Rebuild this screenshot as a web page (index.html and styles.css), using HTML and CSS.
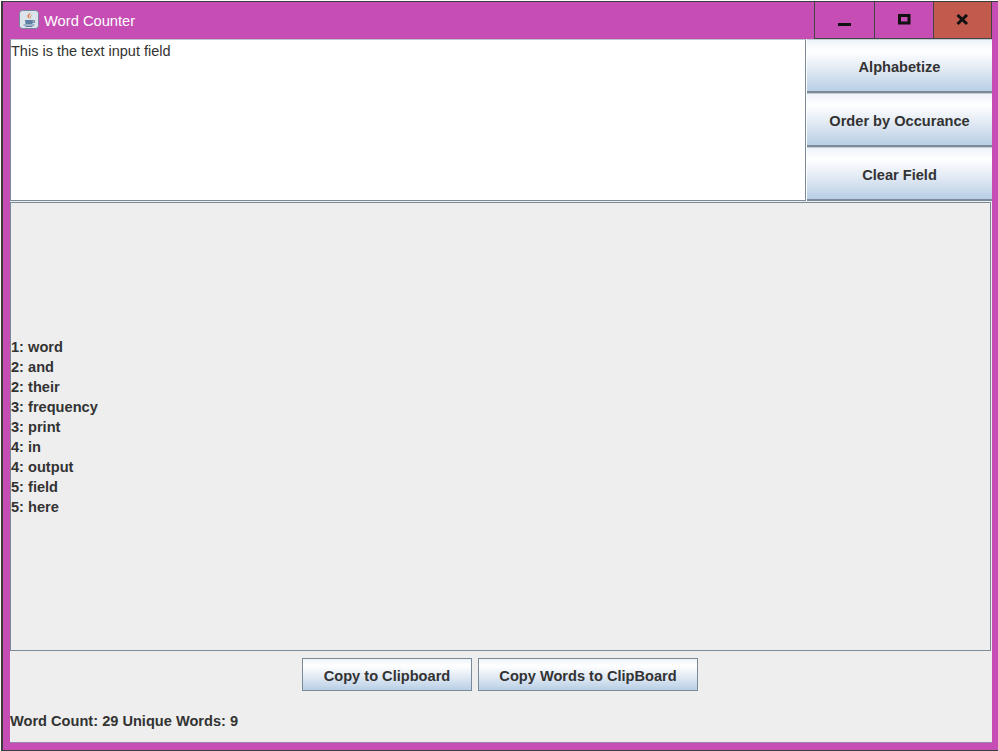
FILE: index.html
```html
<!DOCTYPE html>
<html>
  <head>
    <link rel="stylesheet" href="styles.css">
  </head>
  <body>
    <div class="window">
      <div class="title-bar">
        <div class="app-icon">
          <svg width="20" height="19" viewBox="0 0 20 19">
            <rect x="0.5" y="0.5" width="19" height="18" rx="3" fill="#dde3ea" stroke="#76899c"/>
            <path d="M11 2.500c1 1.700-1.800 2.700-1.200 4.400.2.700.8 1.200 1 1.800-1.700-.9-2.700-1.900-2.300-3.200.4-1.300 2.500-1.600 2.500-3z" fill="#dc6a2c"/>
            <path d="M12.800 5c-1.100.7-1.900 1.300-1.600 2.400.1.400.4.700.5 1.100" fill="none" stroke="#e08a4a" stroke-width="0.900"/>
            <path d="M6 10h8l-.6 4H6.600z" fill="#5d7fa3"/>
            <path d="M14 10.700h1.600v1.700h-2.200" fill="none" stroke="#5d7fa3"/>
            <path d="M4.500 15h11M6.500 16.500h7" stroke="#5d7fa3"/>
          </svg>
        </div>
        <div class="title">Word Counter</div>
        <div class="window-buttons">
          <div class="window-button">
            <svg width="13" height="13" viewBox="0 0 13 13"><rect x="0" y="9" width="13" height="3" fill="#111"/></svg>
          </div>
          <div class="window-button maximize-button">
            <svg width="13" height="13" viewBox="0 0 13 13"><rect x="1.500" y="1.500" width="9.500" height="7.500" fill="none" stroke="#111" stroke-width="3"/></svg>
          </div>
          <div class="window-button close-button">
            <svg width="13" height="13" viewBox="0 0 13 13"><path d="M1.500 1l9.500 9M11 1l-9.500 9" stroke="#111" stroke-width="3" fill="none"/></svg>
          </div>
        </div>
      </div>
      <div class="content">
        <div class="top-row">
          <div class="text-input">This is the text input field</div>
          <div class="side-buttons">
            <div class="button side-button">Alphabetize</div>
            <div class="button side-button">Order by Occurance</div>
            <div class="button side-button">Clear Field</div>
          </div>
        </div>
        <div class="output">
          <div>1: word</div>
          <div>2: and</div>
          <div>2: their</div>
          <div>3: frequency</div>
          <div>3: print</div>
          <div>4: in</div>
          <div>4: output</div>
          <div>5: field</div>
          <div>5: here</div>
        </div>
        <div class="copy-row">
          <div class="button copy-button">Copy to Clipboard</div>
          <div class="button copy-button">Copy Words to ClipBoard</div>
        </div>
        <div class="status">Word Count: 29 Unique Words: 9</div>
      </div>
    </div>
  </body>
</html>
```
FILE: styles.css
```css
html, body {
  margin: 0;
  background-color: #fff;
}
.window {
  box-sizing: border-box;
  width: 997px;
  height: 750px;
  margin: 1px 0 0 1px;
  background-color: #c64db4;
  border-left: 2px solid #3c3c3c;
  border-top: 1px solid #3c3c3c;
  border-bottom: 1px solid #3c3c3c;
  font-family: "Liberation Sans", Arial, sans-serif;
  color: #333;
  display: flex;
  flex-direction: column;
}
.title-bar {
  height: 37px;
  padding-left: 16px;
  display: flex;
  align-items: center;
  flex-shrink: 0;
}
.app-icon {
  width: 20px;
  height: 19px;
  margin-top: -2px;
}
.title {
  color: #fff;
  font-size: 14.7px;
  margin-left: 5px;
  margin-top: 1px;
}
.window-buttons {
  margin-left: auto;
  margin-right: 6px;
  display: flex;
  height: 37px;
  align-self: flex-start;
  border-bottom: 1px solid #444;
  box-sizing: border-box;
}
.window-button {
  box-sizing: border-box;
  width: 60px;
  border-left: 1px solid #444;
  display: flex;
  align-items: center;
  justify-content: center;
}
.maximize-button {
  width: 59px;
}
.close-button {
  width: 59px;
  background-color: #c25a4e;
  border-right: 1px solid #444;
}
.content {
  flex: 1;
  margin: 0 6px 7px 7px;
  background-color: #eee;
  display: flex;
  flex-direction: column;
  border-bottom: 1px solid #9a86a8;
}
.top-row {
  display: flex;
  height: 162px;
  gap: 1px;
  background-color: #fff;
}
.text-input {
  flex: 1;
  background-color: #fff;
  border: 1px solid #7a8a99;
  border-top-color: #bcc5cf;
  font-size: 14.5px;
  line-height: 22px;
}
.side-buttons {
  width: 185px;
  display: flex;
  flex-direction: column;
}
.button {
  box-sizing: border-box;
  border: 1px solid #7a8a99;
  background: linear-gradient(#eef3f9 0%, #ffffff 22%, #dfe8f3 60%, #b8cfe5 100%);
  font-size: 14.6px;
  font-weight: bold;
  display: flex;
  align-items: center;
  justify-content: center;
}
.side-button {
  flex: 1;
  padding-top: 2px;
  border-width: 1px 0 2px 0;
  border-top-color: #c4ccd6;
}
.output {
  box-sizing: border-box;
  height: 449px;
  margin: 1px 1px 0 0;
  border: 1px solid #7a8a99;
  font-size: 14.6px;
  font-weight: bold;
  line-height: 20px;
  display: flex;
  flex-direction: column;
  justify-content: center;
}
.copy-row {
  display: flex;
  justify-content: center;
  gap: 6px;
  margin-top: 7px;
  padding-right: 2px;
}
.copy-button {
  height: 33px;
  padding-top: 2px;
}
.copy-button:first-child {
  width: 170px;
}
.copy-button:last-child {
  width: 220px;
}
.status {
  font-size: 14.6px;
  font-weight: bold;
  margin-top: 22px;
}
```
